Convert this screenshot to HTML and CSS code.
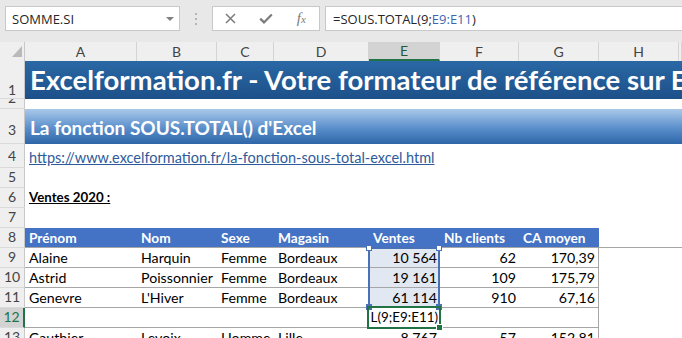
FILE: index.html
```html
<!DOCTYPE html>
<html lang="fr">
<head>
<meta charset="utf-8">
<title>Excel – SOUS.TOTAL</title>
<link rel="stylesheet" href="styles.css">
</head>
<body>
<div class="toolbar">
  <div class="namebox"><span class="name">SOMME.SI</span><span class="caret"></span></div>
  <div class="grip"><i></i><i></i><i></i></div>
  <div class="fxbox">
    <span class="slot"><svg width="11" height="11" viewBox="0 0 11 11"><path d="M1 1 L10 10 M10 1 L1 10" stroke="#7b7b7b" stroke-width="1.5" fill="none"/></svg></span>
    <span class="slot"><svg width="14" height="11" viewBox="0 0 14 11"><path d="M1.2 5.6 L5 9.4 L12.8 1.4" stroke="#7b7b7b" stroke-width="2.2" fill="none"/></svg></span>
    <span class="slot fx">f<span class="fxx">x</span></span>
  </div>
  <div class="formula">=SOUS.TOTAL(9;<span class="ref">E9:E11</span>)</div>
</div>

<div class="sheet">
  <div class="row colhead">
    <div class="corner"><svg width="25" height="19" viewBox="0 0 25 19"><polygon points="22,4 22,15 12,15" fill="#b9b9b9"/></svg></div>
    <div class="ch">A</div>
    <div class="ch">B</div>
    <div class="ch">C</div>
    <div class="ch">D</div>
    <div class="ch sel">E</div>
    <div class="ch">F</div>
    <div class="ch">G</div>
    <div class="ch">H</div>
    <div class="ch"></div>
  </div>

  <div class="row r1">
    <div class="rh">1</div>
    <div class="band title">Excelformation.fr - Votre formateur de référence sur Excel</div>
  </div>
  <div class="row r2"><div class="rh">2</div></div>
  <div class="row r3">
    <div class="rh">3</div>
    <div class="band sub">La fonction SOUS.TOTAL() d'Excel</div>
  </div>
  <div class="row r4">
    <div class="rh">4</div>
    <div class="wide"><a class="link" href="https://www.excelformation.fr/la-fonction-sous-total-excel.html">https://www.excelformation.fr/la-fonction-sous-total-excel.html</a></div>
  </div>
  <div class="row"><div class="rh">5</div></div>
  <div class="row">
    <div class="rh">6</div>
    <div class="wide"><span class="caption">Ventes 2020 :</span></div>
  </div>
  <div class="row"><div class="rh">7</div></div>

  <div class="row">
    <div class="rh">8</div>
    <div class="c th">Prénom</div>
    <div class="c th">Nom</div>
    <div class="c th">Sexe</div>
    <div class="c th">Magasin</div>
    <div class="c th">Ventes</div>
    <div class="c th">Nb clients</div>
    <div class="c th">CA moyen</div>
    <div class="c line"></div>
    <div class="c line"></div>
  </div>
  <div class="row">
    <div class="rh">9</div>
    <div class="c">Alaine</div>
    <div class="c">Harquin</div>
    <div class="c">Femme</div>
    <div class="c">Bordeaux</div>
    <div class="c n hl">10&nbsp;564</div>
    <div class="c n">62</div>
    <div class="c n g">170,39</div>
  </div>
  <div class="row">
    <div class="rh">10</div>
    <div class="c">Astrid</div>
    <div class="c">Poissonnier</div>
    <div class="c">Femme</div>
    <div class="c">Bordeaux</div>
    <div class="c n hl">19&nbsp;161</div>
    <div class="c n">109</div>
    <div class="c n g">175,79</div>
  </div>
  <div class="row">
    <div class="rh">11</div>
    <div class="c">Genevre</div>
    <div class="c">L'Hiver</div>
    <div class="c">Femme</div>
    <div class="c">Bordeaux</div>
    <div class="c n hl">61&nbsp;114</div>
    <div class="c n">910</div>
    <div class="c n g">67,16</div>
  </div>
  <div class="row">
    <div class="rh act">12</div>
    <div class="c"></div>
    <div class="c"></div>
    <div class="c"></div>
    <div class="c"></div>
    <div class="c n edit">L(9;E9:E11)</div>
    <div class="c"></div>
    <div class="c g"></div>
  </div>
  <div class="row">
    <div class="rh">13</div>
    <div class="c">Gauthier</div>
    <div class="c">Levoix</div>
    <div class="c">Homme</div>
    <div class="c">Lille</div>
    <div class="c n">8&nbsp;767</div>
    <div class="c n">57</div>
    <div class="c n g">152,81</div>
  </div>

  <div class="range"><i class="h tl"></i><i class="h tr"></i><i class="h bl"></i><i class="h br"></i></div>
  <div class="active"><i class="fill"></i></div>
</div>
</body>
</html>
```

FILE: styles.css
```css
* { box-sizing: border-box; }
html, body { margin: 0; padding: 0; }
body {
  width: 682px;
  height: 338px;
  overflow: hidden;
  background: #fff;
  font-family: Lato, "Open Sans", sans-serif;
  color: #000;
}

/* ---------- formula bar ---------- */
.toolbar {
  display: flex;
  align-items: flex-start;
  height: 42px;
  padding: 6px 0 0 5px;
  background: #e8e8e8;
  font-family: "Open Sans", sans-serif;
  font-size: 13px;
  color: #262626;
}
.namebox {
  display: flex;
  align-items: center;
  justify-content: space-between;
  width: 175px;
  height: 25px;
  padding: 0 5px 0 6px;
  background: #fff;
  border: 1px solid #c8c8c8;
}
.caret {
  width: 0;
  height: 0;
  border-left: 4px solid transparent;
  border-right: 4px solid transparent;
  border-top: 4px solid #808080;
}
.grip {
  display: flex;
  flex-direction: column;
  justify-content: center;
  align-items: center;
  gap: 3px;
  width: 32px;
  height: 25px;
}
.grip i { display: block; width: 2px; height: 2px; background: #b4b4b4; }
.fxbox {
  display: flex;
  width: 108px;
  height: 25px;
  background: #fff;
  border: 1px solid #c8c8c8;
}
.slot { flex: 1; display: flex; align-items: center; justify-content: center; }
.fx {
  font-family: "Liberation Serif", serif;
  font-style: italic;
  font-size: 15px;
  color: #7b7b7b;
}
.fxx { font-size: 11px; vertical-align: -2px; }
.formula {
  flex: 1;
  display: flex;
  align-items: center;
  height: 25px;
  margin: 0 -2px 0 5px;
  padding-left: 7px;
  background: #fff;
  border: 1px solid #c8c8c8;
  white-space: nowrap;
}
.ref { color: #3d66b0; }

/* ---------- sheet ---------- */
.sheet { position: relative; }
.row {
  display: grid;
  grid-template-columns: 25px 112px 80px 57px 95px 71px 79px 80px 80px 1fr;
  height: 20px;
}
.rh {
  grid-column: 1;
  display: flex;
  align-items: flex-end;
  justify-content: center;
  padding-bottom: 2px;
  background: #efefef;
  border-right: 1px solid #c8c8c8;
  border-bottom: 1px solid #dadada;
  font-size: 14px;
  line-height: 16px;
  color: #444;
  overflow: hidden;
}
.rh.act {
  background: #d3d3d3;
  color: #217346;
  border-right: 2px solid #217346;
}
.colhead { height: 19px; background: #efefef; }
.corner { border-right: 1px solid #c8c8c8; }
.corner svg { display: block; }
.ch {
  display: flex;
  align-items: center;
  justify-content: center;
  border-right: 1px solid #d4d4d4;
  font-size: 14px;
  color: #444;
}
.ch.sel {
  background: #d3d3d3;
  border-bottom: 2px solid #217346;
  color: #1e5b39;
}

.r1 { height: 38px; }
.r2 { height: 10px; }
.r3 { height: 35px; }
.r4 { height: 24px; }
.r1 .rh { padding-bottom: 0; }
.r3 .rh { padding-bottom: 5px; }
.r4 .rh { padding-bottom: 3px; }

.band {
  grid-column: 2 / -1;
  display: flex;
  align-items: flex-end;
  padding-left: 5px;
  color: #fff;
  font-weight: 700;
  white-space: nowrap;
  overflow: hidden;
}
.title {
  font-size: 27.5px;
  line-height: 32px;
  padding-bottom: 3px;
  background: linear-gradient(#2a68a5, #1d5089);
}
.sub {
  font-size: 19px;
  line-height: 24px;
  padding-bottom: 4px;
  background: linear-gradient(#a9c9ea, #5a8ecb 55%, #2e66a8);
}
.wide {
  grid-column: 2 / -1;
  display: flex;
  align-items: flex-end;
  padding: 0 0 1px 4px;
  font-size: 14.5px;
  line-height: 19px;
  white-space: nowrap;
}
.link { color: #2e5b9a; text-decoration: underline; }
.caption { font-size: 13.3px; font-weight: 700; text-decoration: underline; }

.c {
  padding: 0 3px 0 4px;
  font-size: 14.2px;
  line-height: 19px;
  white-space: nowrap;
  overflow: hidden;
  border-bottom: 1px solid #a6a6a6;
}
.n { text-align: right; }
.g { border-right: 1px solid #a6a6a6; }
.th { background: #4472c4; color: #fff; font-weight: 700; font-size: 13.7px; }
.hl { background: #e2e8f2; }
.edit { padding: 0 2px 0 1px; font-size: 13.4px; }

/* ---------- overlays: reference range & active cell ---------- */
.range {
  position: absolute;
  left: 368px;
  top: 205px;
  width: 72px;
  height: 61px;
  border: 2px solid #4a70b5;
}
.h {
  position: absolute;
  width: 6px;
  height: 6px;
  background: #4a70b5;
}
.h.tl, .h.tr { background: #fff; border: 1.5px solid #4a70b5; }
.tl { left: -4px; top: -4px; }
.tr { right: -4px; top: -4px; }
.bl { left: -4px; bottom: -4px; }
.br { right: -4px; bottom: -4px; }
.active {
  position: absolute;
  left: 367px;
  top: 264px;
  width: 74px;
  height: 23px;
  border: 2px solid #217346;
}
.fill {
  position: absolute;
  right: -4px;
  bottom: -4px;
  width: 7px;
  height: 7px;
  background: #217346;
  border: 1px solid #fff;
}
```
